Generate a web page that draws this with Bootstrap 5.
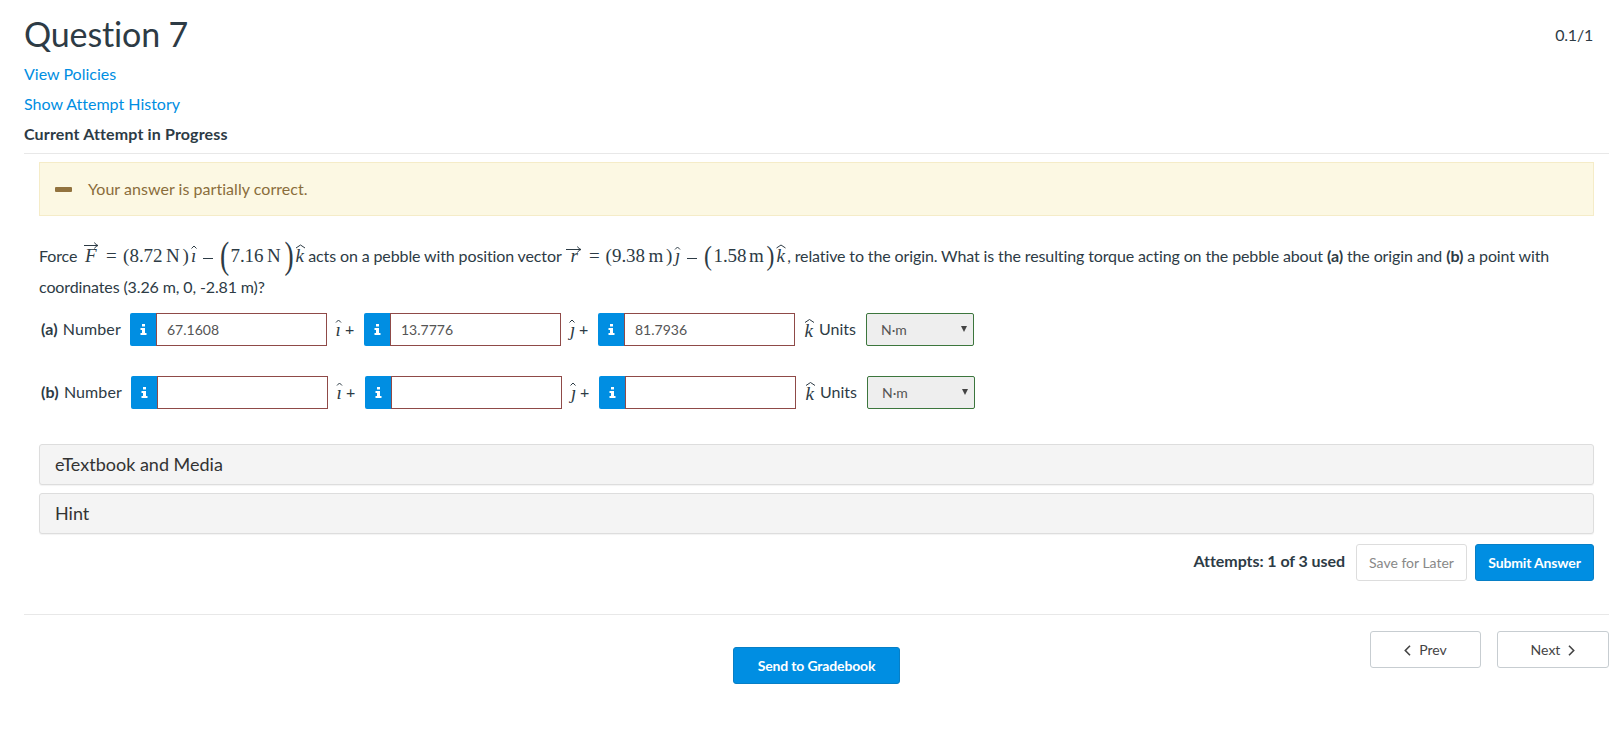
<!DOCTYPE html>
<html lang="en">
<head>
<meta charset="utf-8">
<title>Question 7</title>
<meta name="viewport" content="width=device-width, initial-scale=1">
<link href="https://cdn.jsdelivr.net/npm/bootstrap@5.3.0/dist/css/bootstrap.min.css" rel="stylesheet">
<style>
  body { font-family: Lato, "Liberation Sans", sans-serif; font-size: 16px; line-height: 30px; color: #2d3b45; background: #fff; overflow: hidden; font-variant-ligatures: none; }
  .page { padding: 11px 9px 0 24px; }
  .q-head { height: 48px; }
  .q-head h1 { font-size: 34px; line-height: 46px; font-weight: 400; letter-spacing: -.15px; }
  .q-score { line-height: 48px; margin-right: 16px; letter-spacing: -.2px; }
  .q-link { color: #008ee2; text-decoration: none; }
  .status { letter-spacing: .15px; }
  .rule { height: 1px; background: #e8e8e8; }
  .q-body { margin: 8px 15px 0; }
  .partial { height: 54px; background: #fcf8e3; border: 1px solid #f5ecc8; color: #8a6d3b; padding: 0 15px; letter-spacing: .04px; }
  .dash { width: 17px; height: 5px; border-radius: 1px; background: #92733f; margin-right: 16px; }
  .prompt { margin-top: 24px; line-height: 31px; letter-spacing: -.12px; }
  .math { letter-spacing: 0; font-weight: 400; font-family: "Liberation Serif", serif; fill: #2d3b45; overflow: visible; }
  .math path { fill: none; stroke: #2d3b45; stroke-width: 1; }
  .math .it { font-style: italic; }
  .in-line { vertical-align: -4px; margin: -10px 0; }
  .first-vec { margin-left: 1px; margin-right: -2px; }
  .second-vec { margin-left: -1px; }
  .answer { height: 33px; padding-left: 2px; }
  .lead-label { width: 89px; letter-spacing: .1px; word-spacing: 1px; padding-bottom: 1px; }
  .lead-label.wide { width: 90px; }
  .num { width: 197px; height: 33px; }
  .num .info { width: 27px; padding: 0 0 1px; background: #008ee2; border: 0; border-radius: 2px 0 0 2px; }
  .num .form-control { border: 1px solid #8f4a48; border-radius: 0; padding: 0 10px; font-size: 14px; color: #555; margin-left: -1px !important; }
  .unit-label { width: 71px; padding-bottom: 1px; }
  .units { width: 108px; height: 33px; background: #eee; border: 1px solid #3c763d; border-radius: 2px; font-size: 14px; color: #555; padding: 0 6px 0 14px; }
  .units svg { margin-bottom: 2px; }
  .fold { height: 41px; background: #f4f4f4; border: 1px solid #ddd; border-radius: 3px; padding: 0 15px; font-size: 18px; color: #333; line-height: 39px; box-shadow: 0 1px 1px rgba(0,0,0,.05); }
  .btn { height: 37px; border-radius: 3px; font-size: 14px; line-height: 35px; padding: 0; }
  .btn svg { margin-top: -2px; }
  .b-main { background: #008ee2; border-color: #077fc6; color: #fff; font-weight: 700; letter-spacing: -.15px; }
  .b-save { width: 111px; border-color: #ddd; color: #888; }
  .b-submit { width: 119px; }
  .b-nav { width: 111px; border-color: #c7cdd1; color: #444; }
  .b-send { width: 167px; }
  .answers { margin: 11px 0 35px; }
  .answers .answer + .answer { margin-top: 30px; }
  .foot { margin-top: 10px; }
  .used { margin-right: 11px; line-height: 34px; letter-spacing: -.06px; }
  .end-rule { margin-top: 33px; }
  .foot-nav { padding-top: 16px; }
  .b-send { margin: 16px 0 0 709px; }
  .b-next { width: 112px; margin-left: 16px; }
</style>
</head>
<body>
<main class="page">
  <header class="q-head d-flex justify-content-between">
    <h1 class="m-0">Question 7</h1>
    <div class="q-score">0.1/1</div>
  </header>
  <div><a class="q-link" href="#">View Policies</a></div>
  <div><a class="q-link" href="#">Show Attempt History</a></div>
  <div class="fw-bold status">Current Attempt in Progress</div>
  <div class="rule mt-1"></div>

  <section class="q-body">
    <div class="partial d-flex align-items-center"><span class="dash"></span>Your answer is partially correct.</div>

    <p class="prompt mb-0">Force <svg class="math in-line first-vec" width="224" height="36" viewBox="82 239 224 36" font-size="19">
      <path d="M84 244.5H98M94.5 241.5Q95.5 244 98 244.5Q95.5 245 94.5 247.500"/>
      <text class="it" x="85" y="261">F</text><text x="106" y="261" textLength="12">=</text>
      <text x="123" y="261">(</text><text x="129.500" y="261" textLength="33">8.72</text><text x="166" y="261">N</text><text x="182.500" y="261">)</text>
      <text class="it" x="191" y="261">ı</text><path d="M191.500 247.500L194 245L196.500 247.500"/>
      <path d="M203 257.500H213"/>
      <text transform="translate(220 266.500) scale(1.45 1.95)">(</text><text x="230.500" y="261" textLength="33">7.16</text><text x="267" y="261">N</text><text transform="translate(284.500 266.500) scale(1.45 1.95)">)</text>
      <text class="it" x="295.500" y="261">k</text><path d="M296 247L300.500 244L305 247"/>
    </svg> acts on a pebble with position vector <svg class="math in-line second-vec" width="223" height="36" viewBox="564 239 223 36" font-size="19">
      <path d="M566 248.500H581M577.500 245.500Q578.500 248 581 248.500Q578.500 249 577.500 251.500"/>
      <text class="it" x="570.500" y="261">r</text><text x="589" y="261" textLength="12">=</text>
      <text x="605.500" y="261">(</text><text x="612" y="261" textLength="33">9.38</text><text x="648.500" y="261">m</text><text x="666" y="261">)</text>
      <text class="it" x="675" y="261">ȷ</text><path d="M675 248.500L677.500 246L680 248.500"/>
      <path d="M687 257.500H697"/>
      <text transform="translate(704 264) scale(1.25 1.4)">(</text><text x="713.500" y="261" textLength="33">1.58</text><text x="749" y="261">m</text><text transform="translate(766.500 264) scale(1.25 1.4)">)</text>
      <text class="it" x="776.500" y="261">k</text><path d="M776.500 247L781 244L785.500 247"/>
    </svg>, relative to the origin. What is the resulting torque acting on the pebble about <b>(a)</b> the origin and <b>(b)</b> a point with coordinates (3.26 m, 0, -2.81 m)?</p>

    <div class="answers"></div>

    <div class="fold" id="etext">eTextbook and Media</div>
    <div class="fold mt-2">Hint</div>

    <div class="d-flex justify-content-end foot">
      <div class="fw-bold used">Attempts: 1 of 3 used</div>
      <button class="btn b-save">Save for Later</button>
      <button class="btn b-main b-submit ms-2">Submit Answer</button>
    </div>
  </section>

  <div class="rule end-rule"></div>
  <footer class="d-flex foot-nav">
    <button class="btn b-main b-send">Send to Gradebook</button>
    <button class="btn b-nav b-prev ms-auto"><svg width="7" height="11" viewBox="0 0 7 11" fill="none" stroke="#444" stroke-width="1.600" class="me-2"><path d="M6 .700L1.300 5.500L6 10.300"/></svg>Prev</button>
    <button class="btn b-nav b-next">Next<svg width="7" height="11" viewBox="0 0 7 11" fill="none" stroke="#444" stroke-width="1.600" class="ms-2"><path d="M1 .700L5.700 5.500L1 10.300"/></svg></button>
  </footer>
</main>
<script>
  const infoIcon = '<svg width="7" height="11" viewBox="0 0 7 11" fill="#fff"><path d="M2 0H5V2.500H2ZM.500 4H5V9H6.500V11H.500V9H2V6H.500Z"/></svg>';
  const number = v => `<div class="input-group num flex-nowrap"><span class="input-group-text info justify-content-center">${infoIcon}</span><input class="form-control" value="${v}"></div>`;
  const unit = (g, hat, x) => `<svg class="math" width="37" height="33" font-size="19"><text class="it" x="${x}" y="23">${g}</text><path d="${hat}"/><text x="18" y="22" font-family="Lato" font-size="16">+</text></svg>`;
  const row = (tag, cls, v) => `<div class="answer d-flex align-items-center">
    <div class="lead-label ${cls}"><b>(${tag})</b> Number</div>
    ${number(v[0])}${unit('ı', 'M9 9.500L11.500 7L14 9.500', 8.5)}
    ${number(v[1])}${unit('ȷ', 'M8.500 9.500L11 7L13.500 9.500', 9)}
    ${number(v[2])}<div class="unit-label d-flex align-items-center"><svg class="math" width="24" height="33" font-size="19"><text class="it" x="9.500" y="23.500">k</text><path d="M10 9.500L14.500 6.500L19 9.500"/></svg>Units</div>
    <div class="units d-flex align-items-center justify-content-between"><span>N·m</span><svg width="6" height="6"><path d="M0 0H6L3 6Z" fill="#444"/></svg></div></div>`;
  document.querySelector('.answers').innerHTML = row('a', '', ['67.1608', '13.7776', '81.7936']) + row('b', 'wide', ['', '', '']);
</script>
<script src="https://cdn.jsdelivr.net/npm/bootstrap@5.3.0/dist/js/bootstrap.bundle.min.js"></script>
</body>
</html>
